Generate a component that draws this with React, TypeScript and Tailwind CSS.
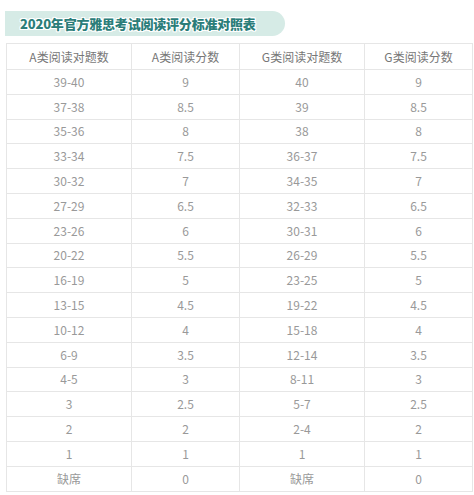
import React from "react";

const rows: [string, string, string, string][] = [
  ["39-40", "9", "40", "9"],
  ["37-38", "8.5", "39", "8.5"],
  ["35-36", "8", "38", "8"],
  ["33-34", "7.5", "36-37", "7.5"],
  ["30-32", "7", "34-35", "7"],
  ["27-29", "6.5", "32-33", "6.5"],
  ["23-26", "6", "30-31", "6"],
  ["20-22", "5.5", "26-29", "5.5"],
  ["16-19", "5", "23-25", "5"],
  ["13-15", "4.5", "19-22", "4.5"],
  ["10-12", "4", "15-18", "4"],
  ["6-9", "3.5", "12-14", "3.5"],
  ["4-5", "3", "8-11", "3"],
  ["3", "2.5", "5-7", "2.5"],
  ["2", "2", "2-4", "2"],
  ["1", "1", "1", "1"],
  ["缺席", "0", "缺席", "0"],
];

const headers = ["A类阅读对题数", "A类阅读分数", "G类阅读对题数", "G类阅读分数"];
const widths = ["w-[125px]", "w-[108px]", "w-[125px]", "w-[108px]"];

export default function App() {
  return (
    <div
      className="w-[474px] h-[495px] bg-white overflow-hidden"
      style={{ fontFamily: '"Noto Sans CJK SC", "Noto Sans", sans-serif' }}
    >
      <div className="pt-[11px] pl-[5px]">
        <div className="w-[280px] h-[25px] bg-[#d6ebe6] rounded-r-[13px] flex items-center pl-[15px]">
          <span className="whitespace-nowrap text-[13px] font-black leading-none text-[#2b7d79] tracking-[-0.2px] [text-shadow:1px_0_0_#fff,-1px_0_0_#fff,0_1px_0_#fff,0_-1px_0_#fff,1px_1px_0_#fff,-1px_-1px_0_#fff,1px_-1px_0_#fff,-1px_1px_0_#fff]">
            2020年官方雅思考试阅读评分标准对照表
          </span>
        </div>
      </div>
      <div className="mt-[7px] ml-[6px]">
        <table className="border-collapse table-fixed w-[466px]">
          <thead>
            <tr className="h-[26px]">
              {headers.map((h, i) => (
                <th
                  key={i}
                  className={`${widths[i]} border border-[#e6e6e6] p-0 text-center text-[12px] font-normal text-[#777] leading-none`}
                >
                  {h}
                </th>
              ))}
            </tr>
          </thead>
          <tbody>
            {rows.map((r, ri) => (
              <tr key={ri} className="h-[24.8px]">
                {r.map((c, ci) => (
                  <td
                    key={ci}
                    className="border border-[#e6e6e6] p-0 text-center text-[12px] text-[#999] leading-none"
                  >
                    {c}
                  </td>
                ))}
              </tr>
            ))}
          </tbody>
        </table>
      </div>
    </div>
  );
}
